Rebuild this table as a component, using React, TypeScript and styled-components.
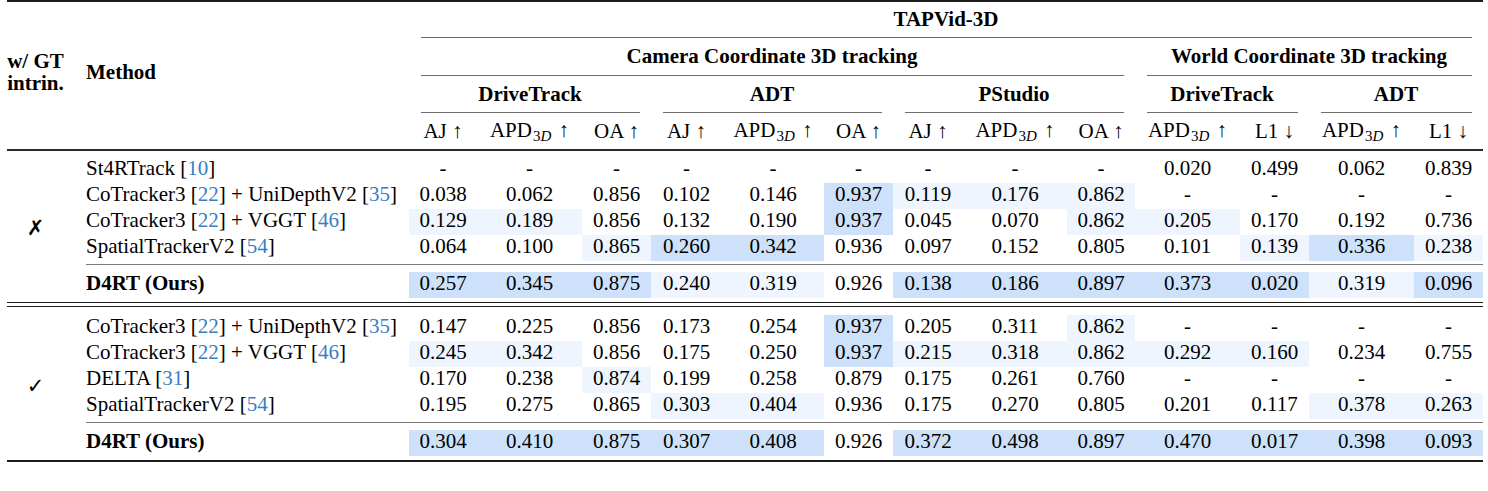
import React from 'react';
import styled, { createGlobalStyle } from 'styled-components';

const GlobalStyle = createGlobalStyle`
  html, body {
    margin: 0;
    padding: 0;
    background: #ffffff;
  }
  body {
    font-family: "Liberation Serif", "Times New Roman", serif;
    color: #000000;
  }
`;

type Shade = 'm' | 'l' | undefined;

const shadeColor = (s: Shade) => (s === 'm' ? '#cde2fa' : s === 'l' ? '#eef5fe' : 'transparent');

const Table = styled.table`
  margin-left: 7px;
  border-collapse: separate;
  border-spacing: 0;
  table-layout: fixed;
  width: 1476px;
  font-size: 21px;
`;

const RuleCell = styled.td<{ $pt?: number; $pb?: number; $pl?: number }>`
  padding: ${p => p.$pt ?? 0}px 0 ${p => p.$pb ?? 0}px ${p => p.$pl ?? 0}px;
  line-height: 0;
  font-size: 0;
`;

const Line = styled.div<{ $weight: number; $color: string }>`
  height: ${p => p.$weight}px;
  background: ${p => p.$color};
`;

const CmidLine = styled.div`
  margin: 0 11px 0 12px;
  height: 1px;
  background: #6e6e6e;
`;

const DoubleLine = styled.div`
  height: 5px;
  box-sizing: border-box;
  border-top: 1px solid #1e1e1e;
  border-bottom: 1px solid #1e1e1e;
`;

const HeadCell = styled.th<{ $h?: number; $bold?: boolean }>`
  padding: 0;
  height: ${p => (p.$h ? `${p.$h}px` : 'auto')};
  text-align: center;
  vertical-align: middle;
  line-height: 21px;
  font-weight: ${p => (p.$bold === false ? 400 : 700)};
  white-space: nowrap;
`;

const CornerCell = styled.th<{ $align: 'left' | 'center' }>`
  padding: 0 0 8px ${p => (p.$align === 'left' ? '22px' : '0')};
  text-align: ${p => p.$align};
  vertical-align: middle;
  line-height: 22px;
  font-weight: 700;
  white-space: nowrap;
`;

const Sub = styled.span`
  font-size: 15px;
  position: relative;
  top: 4px;
  margin-left: 1px;
  margin-right: 2px;

  i {
    font-style: italic;
  }
`;

const GroupCell = styled.td`
  padding: 0;
  text-align: center;
  vertical-align: middle;
  font-family: "DejaVu Sans", sans-serif;
  font-size: 21px;
`;

const MethodCell = styled.td<{ $bold?: boolean }>`
  padding: 0 0 4px 22px;
  height: 22px;
  line-height: 22px;
  text-align: left;
  white-space: nowrap;
  font-weight: ${p => (p.$bold ? 700 : 400)};
`;

const DataCell = styled.td<{ $shade?: Shade }>`
  padding: 0 0 4px;
  height: 22px;
  line-height: 22px;
  text-align: center;
  white-space: nowrap;
  background: ${p => shadeColor(p.$shade)};
`;

const Cite = styled.span`
  color: #3a7ec2;
`;

const colWidths = [57, 345, 68, 105, 69, 71, 102, 69, 70, 104, 68, 105, 69, 105, 69];

type Row = {
  name: React.ReactNode;
  values: string[];
  shades: Record<number, Shade>;
};

const ref = (n: number) => (
  <>
    [<Cite>{n}</Cite>]
  </>
);

const cotUni = (
  <>
    CoTracker3 {ref(22)} + UniDepthV2 {ref(35)}
  </>
);
const cotVggt = (
  <>
    CoTracker3 {ref(22)} + VGGT {ref(46)}
  </>
);
const spatial = <>SpatialTrackerV2 {ref(54)}</>;

const noIntrinsics: Row[] = [
  {
    name: <>St4RTrack {ref(10)}</>,
    values: ['-', '-', '-', '-', '-', '-', '-', '-', '-', '0.020', '0.499', '0.062', '0.839'],
    shades: {},
  },
  {
    name: cotUni,
    values: ['0.038', '0.062', '0.856', '0.102', '0.146', '0.937', '0.119', '0.176', '0.862', '-', '-', '-', '-'],
    shades: { 5: 'm', 6: 'l', 7: 'l', 8: 'l' },
  },
  {
    name: cotVggt,
    values: ['0.129', '0.189', '0.856', '0.132', '0.190', '0.937', '0.045', '0.070', '0.862', '0.205', '0.170', '0.192', '0.736'],
    shades: { 0: 'l', 1: 'l', 5: 'm', 8: 'l', 9: 'l' },
  },
  {
    name: spatial,
    values: ['0.064', '0.100', '0.865', '0.260', '0.342', '0.936', '0.097', '0.152', '0.805', '0.101', '0.139', '0.336', '0.238'],
    shades: { 2: 'l', 3: 'm', 4: 'm', 10: 'l', 11: 'm', 12: 'l' },
  },
];

const noIntrinsicsOurs: Row = {
  name: 'D4RT (Ours)',
  values: ['0.257', '0.345', '0.875', '0.240', '0.319', '0.926', '0.138', '0.186', '0.897', '0.373', '0.020', '0.319', '0.096'],
  shades: { 0: 'm', 1: 'm', 2: 'm', 3: 'l', 4: 'l', 6: 'm', 7: 'm', 8: 'm', 9: 'm', 10: 'm', 11: 'l', 12: 'm' },
};

const withIntrinsics: Row[] = [
  {
    name: cotUni,
    values: ['0.147', '0.225', '0.856', '0.173', '0.254', '0.937', '0.205', '0.311', '0.862', '-', '-', '-', '-'],
    shades: { 5: 'm', 8: 'l' },
  },
  {
    name: cotVggt,
    values: ['0.245', '0.342', '0.856', '0.175', '0.250', '0.937', '0.215', '0.318', '0.862', '0.292', '0.160', '0.234', '0.755'],
    shades: { 0: 'l', 1: 'l', 5: 'm', 6: 'l', 7: 'l', 8: 'l', 9: 'l', 10: 'l' },
  },
  {
    name: <>DELTA {ref(31)}</>,
    values: ['0.170', '0.238', '0.874', '0.199', '0.258', '0.879', '0.175', '0.261', '0.760', '-', '-', '-', '-'],
    shades: { 2: 'l' },
  },
  {
    name: spatial,
    values: ['0.195', '0.275', '0.865', '0.303', '0.404', '0.936', '0.175', '0.270', '0.805', '0.201', '0.117', '0.378', '0.263'],
    shades: { 3: 'l', 4: 'l', 11: 'l', 12: 'l' },
  },
];

const withIntrinsicsOurs: Row = {
  name: 'D4RT (Ours)',
  values: ['0.304', '0.410', '0.875', '0.307', '0.408', '0.926', '0.372', '0.498', '0.897', '0.470', '0.017', '0.398', '0.093'],
  shades: { 0: 'm', 1: 'm', 2: 'm', 3: 'm', 4: 'm', 6: 'm', 7: 'm', 8: 'm', 9: 'm', 10: 'm', 11: 'm', 12: 'm' },
};

const up = ' \u2191';
const down = ' \u2193';
const apd = (
  <>
    APD
    <Sub>
      3<i>D</i>
    </Sub>
    {up}
  </>
);
const metrics: React.ReactNode[] = [
  <>AJ{up}</>, apd, <>OA{up}</>,
  <>AJ{up}</>, apd, <>OA{up}</>,
  <>AJ{up}</>, apd, <>OA{up}</>,
  apd, <>L1{down}</>,
  apd, <>L1{down}</>,
];

const datasets = [
  { label: 'DriveTrack', span: 3 },
  { label: 'ADT', span: 3 },
  { label: 'PStudio', span: 3 },
  { label: 'DriveTrack', span: 2 },
  { label: 'ADT', span: 2 },
];

const DataRow: React.FC<{ row: Row; bold?: boolean; lead?: React.ReactNode }> = ({ row, bold, lead }) => (
  <tr>
    {lead}
    <MethodCell $bold={bold}>{row.name}</MethodCell>
    {row.values.map((v, i) => (
      <DataCell key={i} $shade={row.shades[i]}>
        {v}
      </DataCell>
    ))}
  </tr>
);

const Block: React.FC<{ mark: string; rows: Row[]; ours: Row }> = ({ mark, rows, ours }) => (
  <>
    {rows.map((row, i) => (
      <DataRow
        key={i}
        row={row}
        lead={i === 0 ? <GroupCell rowSpan={rows.length + 2}>{mark}</GroupCell> : undefined}
      />
    ))}
    <tr>
      <RuleCell colSpan={14} $pt={3} $pb={7} $pl={22}>
        <Line $weight={1} $color="#7a7a7a" />
      </RuleCell>
    </tr>
    <DataRow row={ours} bold />
  </>
);

export default function App() {
  return (
    <>
      <GlobalStyle />
      <Table>
        <colgroup>
          {colWidths.map((w, i) => (
            <col key={i} style={{ width: w }} />
          ))}
        </colgroup>
        <thead>
          <tr>
            <RuleCell colSpan={15}>
              <Line $weight={2} $color="#1e1e1e" />
            </RuleCell>
          </tr>
          <tr>
            <CornerCell rowSpan={7} $align="center">
              w/ GT
              <br />
              intrin.
            </CornerCell>
            <CornerCell rowSpan={7} $align="left">
              Method
            </CornerCell>
            <HeadCell colSpan={13} $h={35}>
              TAPVid-3D
            </HeadCell>
          </tr>
          <tr>
            <RuleCell colSpan={13}>
              <CmidLine />
            </RuleCell>
          </tr>
          <tr>
            <HeadCell colSpan={9} $h={37}>
              Camera Coordinate 3D tracking
            </HeadCell>
            <HeadCell colSpan={4} $h={37}>
              World Coordinate 3D tracking
            </HeadCell>
          </tr>
          <tr>
            <RuleCell colSpan={9}>
              <CmidLine />
            </RuleCell>
            <RuleCell colSpan={4}>
              <CmidLine />
            </RuleCell>
          </tr>
          <tr>
            {datasets.map((d, i) => (
              <HeadCell key={i} colSpan={d.span} $h={36}>
                {d.label}
              </HeadCell>
            ))}
          </tr>
          <tr>
            {datasets.map((d, i) => (
              <RuleCell key={i} colSpan={d.span}>
                <CmidLine />
              </RuleCell>
            ))}
          </tr>
          <tr>
            {metrics.map((m, i) => (
              <HeadCell key={i} $h={36} $bold={false}>
                {m}
              </HeadCell>
            ))}
          </tr>
          <tr>
            <RuleCell colSpan={15} $pb={6}>
              <Line $weight={2} $color="#2a2a2a" />
            </RuleCell>
          </tr>
        </thead>
        <tbody>
          <Block mark={'\u2717'} rows={noIntrinsics} ours={noIntrinsicsOurs} />
          <tr>
            <RuleCell colSpan={15} $pt={4} $pb={8}>
              <DoubleLine />
            </RuleCell>
          </tr>
          <Block mark={'\u2713'} rows={withIntrinsics} ours={withIntrinsicsOurs} />
          <tr>
            <RuleCell colSpan={15} $pt={4}>
              <Line $weight={2} $color="#1e1e1e" />
            </RuleCell>
          </tr>
        </tbody>
      </Table>
    </>
  );
}
